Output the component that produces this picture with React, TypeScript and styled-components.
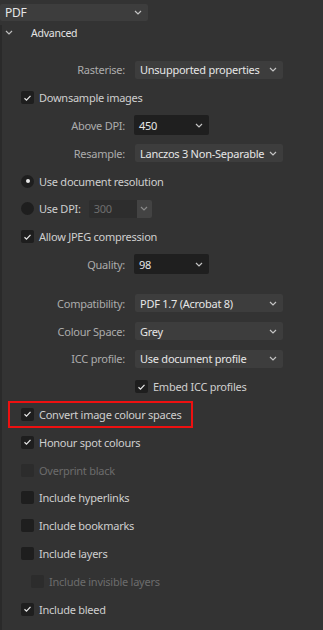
import React from "react";
import styled, { createGlobalStyle, css } from "styled-components";

const Global = createGlobalStyle`
  html, body { margin: 0; padding: 0; background: #333333; }
  body {
    font-family: "Noto Sans", "Open Sans", sans-serif;
    font-size: 11px;
    letter-spacing: -0.25px;
    color: #d0d0d0;
    -webkit-font-smoothing: antialiased;
  }
`;

const Page = styled.div`
  width: 323px;
  height: 630px;
  background: #333333;
  overflow: hidden;
  display: flex;
  flex-direction: column;
`;

const TopBar = styled.div`
  padding-top: 4px;
  display: flex;
`;

const Chevron = ({ color = "#c4c4c4" }: { color?: string }) => (
  <svg width="8" height="5" viewBox="0 0 8 5">
    <polyline points="1,1 4,4 7,1" fill="none" stroke={color} strokeWidth="1.2" />
  </svg>
);

const Select = styled.div<{ $w: number; $h?: number; $dark?: boolean; $big?: boolean }>`
  width: ${(p) => p.$w}px;
  height: ${(p) => p.$h ?? 18}px;
  box-sizing: border-box;
  border-radius: 2px;
  background: ${(p) => (p.$dark ? "#1f1f1f" : "#3d3d3d")};
  display: flex;
  align-items: center;
  justify-content: space-between;
  padding: 0 6px 0 5px;
  color: #e6e6e6;
  font-size: ${(p) => (p.$big ? "12px" : "11px")};
  white-space: nowrap;
`;

const Panel = styled.div`
  margin-top: 4px;
  border-left: 2px solid #2a2a2a;
  flex: 1;
  display: flex;
  flex-direction: column;
`;

const Header = styled.div`
  height: 15px;
  display: flex;
  align-items: center;
  padding-left: 3px;
  gap: 18px;
  color: #e4e4e4;
  font-size: 10.5px;
  margin-bottom: 16px;
`;

const rowBase = css`
  height: 27.8px;
  display: flex;
  align-items: center;
  flex-shrink: 0;
`;

const FieldRow = styled.div<{ $gapTop?: number }>`
  ${rowBase};
  margin-top: ${(p) => p.$gapTop ?? 0}px;
`;

const Label = styled.div`
  width: 123px;
  text-align: right;
  color: #acacac;
  margin-right: 10px;
  white-space: nowrap;
`;

const CheckRow = styled.div<{ $indent?: number; $disabled?: boolean }>`
  ${rowBase};
  padding-left: ${(p) => p.$indent ?? 19}px;
  gap: 5px;
  color: ${(p) => (p.$disabled ? "#6c6c6c" : "#cfcfcf")};
  white-space: nowrap;
`;

const Highlight = styled.div`
  margin-left: 6px;
  width: 185px;
  box-shadow: inset 0 0 0 2px #ee1010;
  & > ${CheckRow} {
    padding-left: 13px;
  }
`;

const Box = styled.div<{ $disabled?: boolean }>`
  width: 13px;
  height: 13px;
  box-sizing: border-box;
  border-radius: 2px;
  background: ${(p) => (p.$disabled ? "#2c2c2c" : "#1e1e1e")};
  display: flex;
  align-items: center;
  justify-content: center;
`;

const Radio = styled.div`
  width: 13px;
  height: 13px;
  border-radius: 50%;
  background: #1e1e1e;
  display: flex;
  align-items: center;
  justify-content: center;
`;

const Dot = styled.div`
  width: 4px;
  height: 4px;
  border-radius: 50%;
  background: #e8e8e8;
`;

const Check = () => (
  <svg width="9" height="8" viewBox="0 0 9 8">
    <polyline points="1.5,4.3 3.5,6.2 7.5,1.8" fill="none" stroke="#e8e8e8" strokeWidth="1.2" />
  </svg>
);

const Spin = styled.div`
  margin-left: 3px;
  display: flex;
  height: 18px;
`;

const SpinInput = styled.div`
  width: 48px;
  background: #2d2d2d;
  color: #6e6e6e;
  display: flex;
  align-items: center;
  padding-left: 5px;
  box-sizing: border-box;
  border-radius: 2px 0 0 2px;
`;

const SpinButton = styled.div`
  width: 15px;
  background: #434343;
  display: flex;
  align-items: center;
  justify-content: center;
  border-radius: 0 2px 2px 0;
`;

type CbProps = { label: string; checked?: boolean; disabled?: boolean; indent?: number };
const Checkbox = ({ label, checked, disabled, indent }: CbProps) => (
  <CheckRow $indent={indent} $disabled={disabled}>
    <Box $disabled={disabled}>{checked && <Check />}</Box>
    <span>{label}</span>
  </CheckRow>
);

const Field = ({
  label,
  value,
  w = 148,
  dark,
  gapTop,
}: {
  label: string;
  value: string;
  w?: number;
  dark?: boolean;
  gapTop?: number;
}) => (
  <FieldRow $gapTop={gapTop}>
    <Label>{label}</Label>
    <Select $w={w} $h={dark ? 20 : 18} $dark={dark} style={dark ? { marginLeft: -1 } : undefined}>
      <span>{value}</span>
      <Chevron />
    </Select>
  </FieldRow>
);

export default function App() {
  return (
    <Page>
      <Global />
      <TopBar>
        <Select $w={148} $h={17} $big>
          <span>PDF</span>
          <Chevron />
        </Select>
      </TopBar>
      <Panel>
        <Header>
          <Chevron color="#bdbdbd" />
          <span>Advanced</span>
        </Header>
        <Field label="Rasterise:" value="Unsupported properties" />
        <Checkbox label="Downsample images" checked />
        <Field label="Above DPI:" value="450" w={75} dark />
        <Field label="Resample:" value="Lanczos 3 Non-Separable" />
        <CheckRow>
          <Radio>
            <Dot />
          </Radio>
          <span>Use document resolution</span>
        </CheckRow>
        <CheckRow>
          <Radio />
          <span>Use DPI:</span>
          <Spin>
            <SpinInput>300</SpinInput>
            <SpinButton>
              <Chevron color="#8a8a8a" />
            </SpinButton>
          </Spin>
        </CheckRow>
        <Checkbox label="Allow JPEG compression" checked />
        <Field label="Quality:" value="98" w={75} dark />
        <Field label="Compatibility:" value="PDF 1.7 (Acrobat 8)" gapTop={11} />
        <Field label="Colour Space:" value="Grey" />
        <Field label="ICC profile:" value="Use document profile" />
        <Checkbox label="Embed ICC profiles" checked indent={133} />
        <Highlight>
          <Checkbox label="Convert image colour spaces" checked />
        </Highlight>
        <Checkbox label="Honour spot colours" checked />
        <Checkbox label="Overprint black" disabled />
        <Checkbox label="Include hyperlinks" />
        <Checkbox label="Include bookmarks" />
        <Checkbox label="Include layers" />
        <Checkbox label="Include invisible layers" disabled indent={29} />
        <Checkbox label="Include bleed" checked />
      </Panel>
    </Page>
  );
}
